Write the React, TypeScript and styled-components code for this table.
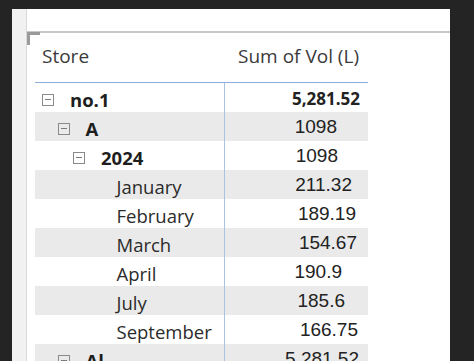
import React from 'react'
import styled, { createGlobalStyle } from 'styled-components'

interface IRow {
  label: string
  level: number
  value: string
  expandable?: boolean
  bold?: boolean
  total?: boolean
  pad: number
}

const rows: IRow[] = [
  { label: 'no.1', level: 0, value: '5,281.52', expandable: true, bold: true, total: true, pad: 8 },
  { label: 'A', level: 1, value: '1098', expandable: true, bold: true, pad: 31 },
  { label: '2024', level: 2, value: '1098', expandable: true, bold: true, pad: 30 },
  { label: 'January', level: 3, value: '211.32', pad: 16 },
  { label: 'February', level: 3, value: '189.19', pad: 12 },
  { label: 'March', level: 3, value: '154.67', pad: 11 },
  { label: 'April', level: 3, value: '190.9', pad: 26 },
  { label: 'July', level: 3, value: '185.6', pad: 23 },
  { label: 'September', level: 3, value: '166.75', pad: 10 },
  { label: 'Al', level: 1, value: '5,281.52', expandable: true, bold: true, pad: 9 },
]

const GlobalStyle = createGlobalStyle`
  html, body {
    margin: 0;
    padding: 0;
    background: #242424;
    overflow: hidden;
  }
`

const Page = styled.div`
  display: flex;
  height: 361px;
  padding: 9px 24px 0 12px;
  box-sizing: border-box;
`

const Panel = styled.div`
  display: flex;
  flex: 1;
  background: #fff;
  overflow: hidden;
`

const LeftStrip = styled.div`
  width: 14px;
  flex-shrink: 0;
  background: #f1f1f1;
  border-right: 1px solid #d9d9d9;
`

const Main = styled.div`
  display: flex;
  flex-direction: column;
  flex: 1;
  min-height: 0;
`

const TopBar = styled.div`
  height: 22px;
  flex-shrink: 0;
  border-bottom: 2px solid #c8c8c8;
`

const TableArea = styled.div`
  position: relative;
  flex-shrink: 0;
  padding-left: 8px;
`

const Corner = styled.div`
  position: absolute;
  top: -1px;
  left: 0;
  width: 13px;
  height: 13px;
  border-top: 3px solid #9a9a9a;
  border-left: 3px solid #9a9a9a;
  box-sizing: border-box;
`

const Table = styled.div`
  display: grid;
  grid-template-columns: 189px 144px;
  width: 333px;
`

const HeaderCell = styled.div<{ $right?: boolean }>`
  height: 50px;
  display: flex;
  align-items: center;
  justify-content: ${(p) => (p.$right ? 'flex-end' : 'flex-start')};
  padding: 0 ${(p) => (p.$right ? '9px' : '0')} 4px ${(p) => (p.$right ? '0' : '7px')};
  box-sizing: border-box;
  border-bottom: 1px solid #8cafd9;
  font-family: 'Open Sans', 'Noto Sans', sans-serif;
  font-size: 19px;
  color: #3a3a3a;
`

const LabelCell = styled.div<{ $striped: boolean; $level: number }>`
  height: 29px;
  display: flex;
  align-items: center;
  padding-top: 3px;
  padding-left: ${(p) => 7 + p.$level * 15.5}px;
  box-sizing: border-box;
  background: ${(p) => (p.$striped ? '#eaeaea' : '#fff')};
  font-family: 'Open Sans', 'Noto Sans', sans-serif;
  font-size: 18.5px;
  color: #262626;
`

const ValueCell = styled.div<{ $striped: boolean; $pad: number; $total?: boolean }>`
  height: 29px;
  display: flex;
  align-items: center;
  justify-content: flex-end;
  padding-right: ${(p) => p.$pad}px;
  padding-top: 1px;
  box-sizing: border-box;
  border-left: 1px solid #a9c3e3;
  background: ${(p) => (p.$striped ? '#eaeaea' : '#fff')};
  font-family: ${(p) => (p.$total ? "'Open Sans', 'Noto Sans', sans-serif" : "'Liberation Sans', Arial, sans-serif")};
  font-size: ${(p) => (p.$total ? '17px' : '19px')};
  font-weight: ${(p) => (p.$total ? 700 : 400)};
  color: #222;
`

const Toggle = styled.span`
  position: relative;
  width: 12px;
  height: 12px;
  margin-right: 16px;
  margin-top: 2px;
  border: 1.5px solid #8a8a8a;
  box-sizing: border-box;
  flex-shrink: 0;

  &::after {
    content: '';
    position: absolute;
    left: 2px;
    right: 2px;
    top: 3.5px;
    height: 1.5px;
    background: #7a7a7a;
  }
`

const Label = styled.span<{ $bold?: boolean; $indent: boolean }>`
  font-weight: ${(p) => (p.$bold ? 700 : 400)};
  margin-left: ${(p) => (p.$indent ? '28px' : '0')};
  color: ${(p) => (p.$bold ? '#1e1e1e' : '#2b2b2b')};
`

export default function App() {
  return (
    <>
      <GlobalStyle />
      <Page>
        <Panel>
          <LeftStrip />
          <Main>
            <TopBar />
            <TableArea>
              <Corner />
              <Table>
                <HeaderCell>Store</HeaderCell>
                <HeaderCell $right>Sum of Vol (L)</HeaderCell>
                {rows.map((row, i) => (
                  <React.Fragment key={i}>
                    <LabelCell $striped={i % 2 === 1} $level={row.level}>
                      {row.expandable && <Toggle />}
                      <Label $bold={row.bold} $indent={!row.expandable}>
                        {row.label}
                      </Label>
                    </LabelCell>
                    <ValueCell $striped={i % 2 === 1} $pad={row.pad} $total={row.total}>
                      {row.value}
                    </ValueCell>
                  </React.Fragment>
                ))}
              </Table>
            </TableArea>
          </Main>
        </Panel>
      </Page>
    </>
  )
}
